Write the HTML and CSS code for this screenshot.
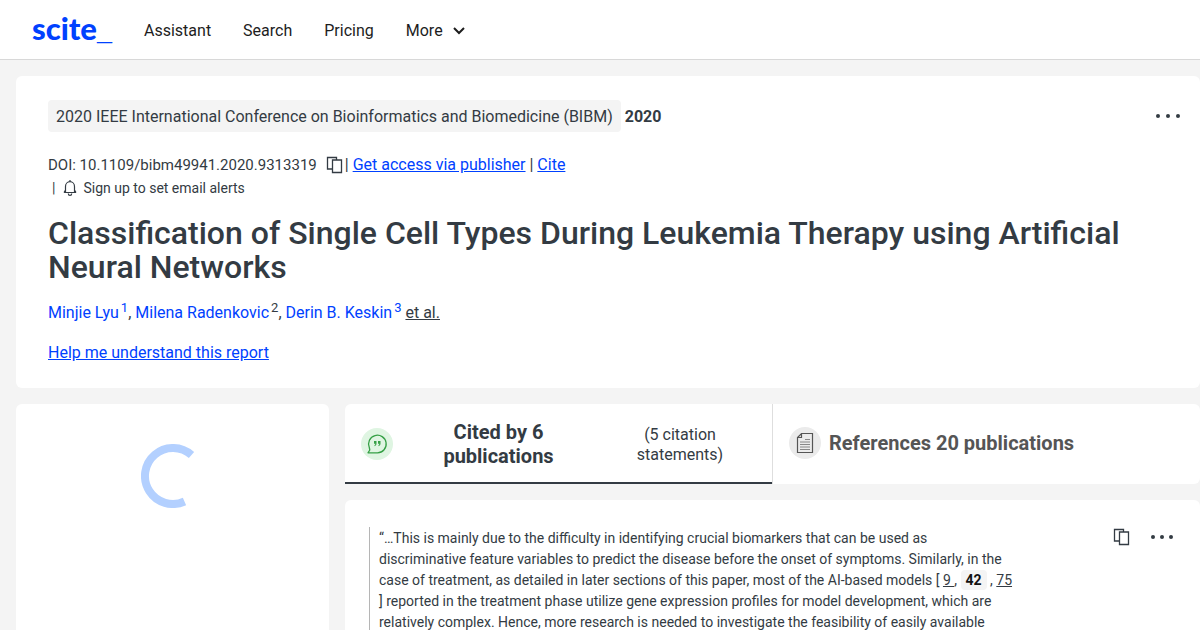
FILE: index.html
```
<!DOCTYPE html>
<html lang="en">
<head>
    <meta charset="utf-8">
    <meta name="viewport" content="width=device-width, initial-scale=1">
    <title>Classification of Single Cell Types During Leukemia Therapy using Artificial Neural Networks - scite</title>
    <link rel="stylesheet" href="styles.css">
</head>
<body>
    <header class="header">
        <a class="logo" href="#">scite<span class="logo-bar">_</span></a>
        <nav class="nav">
            <a href="#">Assistant</a>
            <a href="#">Search</a>
            <a href="#">Pricing</a>
            <button class="more" type="button">
                More
                <svg width="12" height="8" viewBox="0 0 12 8" fill="none" stroke="currentColor" stroke-width="2"><path d="M1 1l5 5 5-5"/></svg>
            </button>
        </nav>
    </header>

    <main class="page">
        <section class="card paper">
            <div class="venue-row">
                <span class="venue">2020 IEEE International Conference on Bioinformatics and Biomedicine (BIBM)</span>
                <strong>2020</strong>
                <button class="dots dots-large" type="button" aria-label="More options"><i></i><i></i><i></i></button>
            </div>
            <div class="doi-row">
                <span class="doi">DOI: 10.1109/bibm49941.2020.9313319</span>
                <button class="copy-doi" type="button" aria-label="Copy DOI">
                    <svg width="18" height="18" viewBox="0 0 18 18" fill="none" stroke="currentColor" stroke-width="1.3"><path d="M6 13H1.500V1.500h9V4M6.500 4h9v12.500h-9z"/></svg>
                </button>
                <span>| <a href="#">Get access via publisher</a> | <a href="#">Cite</a></span>
            </div>
            <div class="alert-row">
                <span class="bar">|</span>
                <button class="alert-button" type="button">
                    <svg width="14" height="18" viewBox="0 0 14 18" fill="none" stroke="currentColor" stroke-width="1.2"><path d="M7 1v1.500M1 13.500h12M2.500 13.500V7.500a4.500 4.800 0 0 1 9 0v6M1 13.500l1.500-2.500M13 13.500l-1.500-2.500"/><path d="M5.300 14.500a1.700 1.900 0 0 0 3.400 0"/></svg>
                    Sign up to set email alerts
                </button>
            </div>
            <h1>Classification of Single Cell Types During Leukemia Therapy using Artificial Neural Networks</h1>
            <div class="authors"><a href="#">Minjie Lyu</a><sup class="linked">1</sup>, <a href="#">Milena Radenkovic</a><sup>2</sup>, <a href="#">Derin B. Keskin</a><sup class="linked">3</sup> <button class="et-al" type="button">et al.</button></div>
            <a class="help" href="#">Help me understand this report</a>
        </section>

        <div class="columns">
            <aside class="card sidebar">
                <svg width="64" height="64" viewBox="0 0 64 64" fill="none" stroke="#b3d0ff" stroke-width="8"><path d="M43.500 57.500A28 28 0 1 1 50.500 11"/></svg>
            </aside>

            <div class="content">
                <div class="tabs" role="tablist">
                    <button class="tab active" type="button" role="tab" aria-selected="true">
                        <svg width="32" height="32" viewBox="0 0 32 32" fill="none"><circle cx="16" cy="16" r="16" fill="#dff5e2"/><path d="M7 24.800h9.500A8.800 8.800 0 1 0 8.300 19.500L8.800 22z" stroke="#36a046" stroke-width="1.300" stroke-linejoin="round"/><path d="M13 13h2.500v2.500c0 1.500-.8 2.300-2 2.700v-1c.6-.4.9-.9.900-1.500H13zM17 13h2.500v2.500c0 1.500-.8 2.300-2 2.700v-1c.6-.4.9-.9.900-1.500H17z" fill="#36a046"/></svg>
                        <span class="tab-title">Cited by 6 publications</span>
                        <span class="tab-note">(5 citation statements)</span>
                    </button>
                    <button class="tab" type="button" role="tab" aria-selected="false">
                        <svg width="32" height="32" viewBox="0 0 32 32" fill="none"><circle cx="16" cy="16" r="16" fill="#ebebeb"/><path d="M12.500 6.500h11v19h-15v-15zM12.500 6.500v4h-4" stroke="#555" stroke-width="1.200"/><path d="M16 12.500h5M11 15h10M11 17.500h10M11 20h10M11 22.500h10" stroke="#888"/></svg>
                        <span class="tab-title">References 20 publications</span>
                    </button>
                </div>

                <article class="card citation">
                    <blockquote>
                        “…This is mainly due to the difficulty in identifying crucial biomarkers that can be used as<br>
                        discriminative feature variables to predict the disease before the onset of symptoms. Similarly, in the<br>
                        case of treatment, as detailed in later sections of this paper, most of the AI-based models [ <a href="#">9 </a>, <strong>42</strong> , <a href="#">75</a><br>
                        ] reported in the treatment phase utilize gene expression profiles for model development, which are<br>
                        relatively complex. Hence, more research is needed to investigate the feasibility of easily available
                    </blockquote>
                    <div class="actions">
                        <button type="button" aria-label="Copy citation">
                            <svg width="18" height="18" viewBox="0 0 18 18" fill="none" stroke="currentColor" stroke-width="1.300"><path d="M6 13H1.500V1.500h9V4M6.500 4h9v12.500h-9z"/></svg>
                        </button>
                        <button class="dots" type="button" aria-label="More options"><i></i><i></i><i></i></button>
                    </div>
                </article>
            </div>
        </div>
    </main>
</body>
</html>
```
FILE: styles.css
```
* {
    box-sizing: border-box;
}

body {
    margin: 0;
    height: 100vh;
    overflow: hidden;
    background-color: #f4f4f4;
    color: #333b43;
    font-family: Roboto, "Liberation Sans", sans-serif;
    font-size: 16px;
    line-height: 24px;
}

a {
    color: #0041ff;
}

button {
    padding: 0;
    border: 0;
    background: none;
    color: inherit;
    font: inherit;
    cursor: pointer;
}

svg {
    display: block;
    flex: none;
}

.header {
    display: flex;
    align-items: center;
    height: 60px;
    padding: 0 32px;
    background-color: #fff;
    border-bottom: 1px solid #d8d8d8;
}

.logo {
    width: 80px;
    margin-right: 32px;
    font-family: Lato, sans-serif;
    font-size: 31px;
    font-weight: 900;
    line-height: 32px;
    text-decoration: none;
    white-space: nowrap;
}

.logo-bar {
    font-family: "Liberation Sans", sans-serif;
    font-size: 27px;
    font-weight: 700;
}

.nav {
    display: flex;
    gap: 32px;
    padding-top: 2px;
    color: #1d1d1d;
}

.nav a {
    color: inherit;
    text-decoration: none;
}

.more {
    display: flex;
    align-items: center;
    gap: 10px;
}

.page {
    padding: 16px 0 0 16px;
}

.card {
    background-color: #fff;
    border-radius: 6px;
}

.paper {
    padding: 24px 16px 23px 32px;
}

.venue-row {
    display: flex;
    align-items: center;
    gap: 4px;
    margin-bottom: 20px;
}

.venue-row strong {
    padding-top: 2px;
}

.venue {
    padding: 5px 8px 3px;
    background-color: #f4f4f4;
    border-radius: 4px;
}

.dots {
    display: flex;
    align-items: center;
    gap: 5px;
    padding: 4px;
}

.dots i {
    width: 4px;
    height: 4px;
    border-radius: 50%;
    background-color: #333b43;
}

.dots-large {
    gap: 6px;
    margin-left: auto;
}

.doi-row {
    display: flex;
    align-items: center;
    height: 24px;
    padding-top: 2px;
}

.doi {
    font-size: 15px;
}

.copy-doi {
    margin: 0 1px 0 9px;
}

.alert-row {
    display: flex;
    align-items: center;
    padding-left: 4px;
    font-size: 14px;
}

.bar {
    margin-right: 8px;
}

.alert-button {
    display: flex;
    align-items: center;
    gap: 6px;
}

h1 {
    margin: 16px 0 17px;
    font-size: 32px;
    font-weight: 500;
    line-height: 34px;
}

.authors {
    margin-bottom: 16px;
}

.authors a {
    text-decoration: none;
}

sup {
    margin-left: 2px;
    font-size: 13px;
    line-height: 0;
}

.linked {
    color: #0041ff;
}

.et-al {
    text-decoration: underline;
}

.help {
    display: inline-block;
}

.columns {
    display: grid;
    grid-template-columns: 313px 1fr;
    gap: 16px;
    margin-top: 16px;
}

.sidebar {
    display: flex;
    justify-content: center;
    padding-top: 40px;
}

.tabs {
    display: flex;
    margin-bottom: 16px;
    border-radius: 6px 6px 6px 0;
    background-color: #fff;
    overflow: hidden;
}

.tab {
    display: flex;
    flex: 1 1 0;
    align-items: center;
    gap: 8px;
    height: 80px;
    padding: 0 16px 2px;
    color: #555;
}

.tab + .tab {
    border-left: 1px solid #dedede;
}

.tab.active {
    padding: 2px 16px 0;
    border-bottom: 2px solid #333b43;
    color: #333b43;
}

.tab-title {
    font-size: 20px;
    font-weight: 700;
}

.active .tab-title {
    flex: 1;
    padding: 0 32px;
}

.tab-note {
    width: 152px;
    padding: 1px 32px 0;
    line-height: 20px;
}

.citation {
    display: flex;
    justify-content: space-between;
    align-items: flex-start;
    padding: 27px 23px 24px 24px;
}

blockquote {
    margin: 0;
    padding: 1px 0 0 9px;
    border-left: 1px solid #b5b5b5;
    font-size: 14px;
    line-height: 21px;
    white-space: nowrap;
}

blockquote a {
    color: inherit;
    white-space: pre;
}

blockquote strong {
    padding: 2px 5px;
    border-radius: 4px;
    background-color: #f4f4f4;
    color: #111;
}

.actions {
    display: flex;
    align-items: center;
    gap: 16px;
    padding-top: 1px;
}
```
